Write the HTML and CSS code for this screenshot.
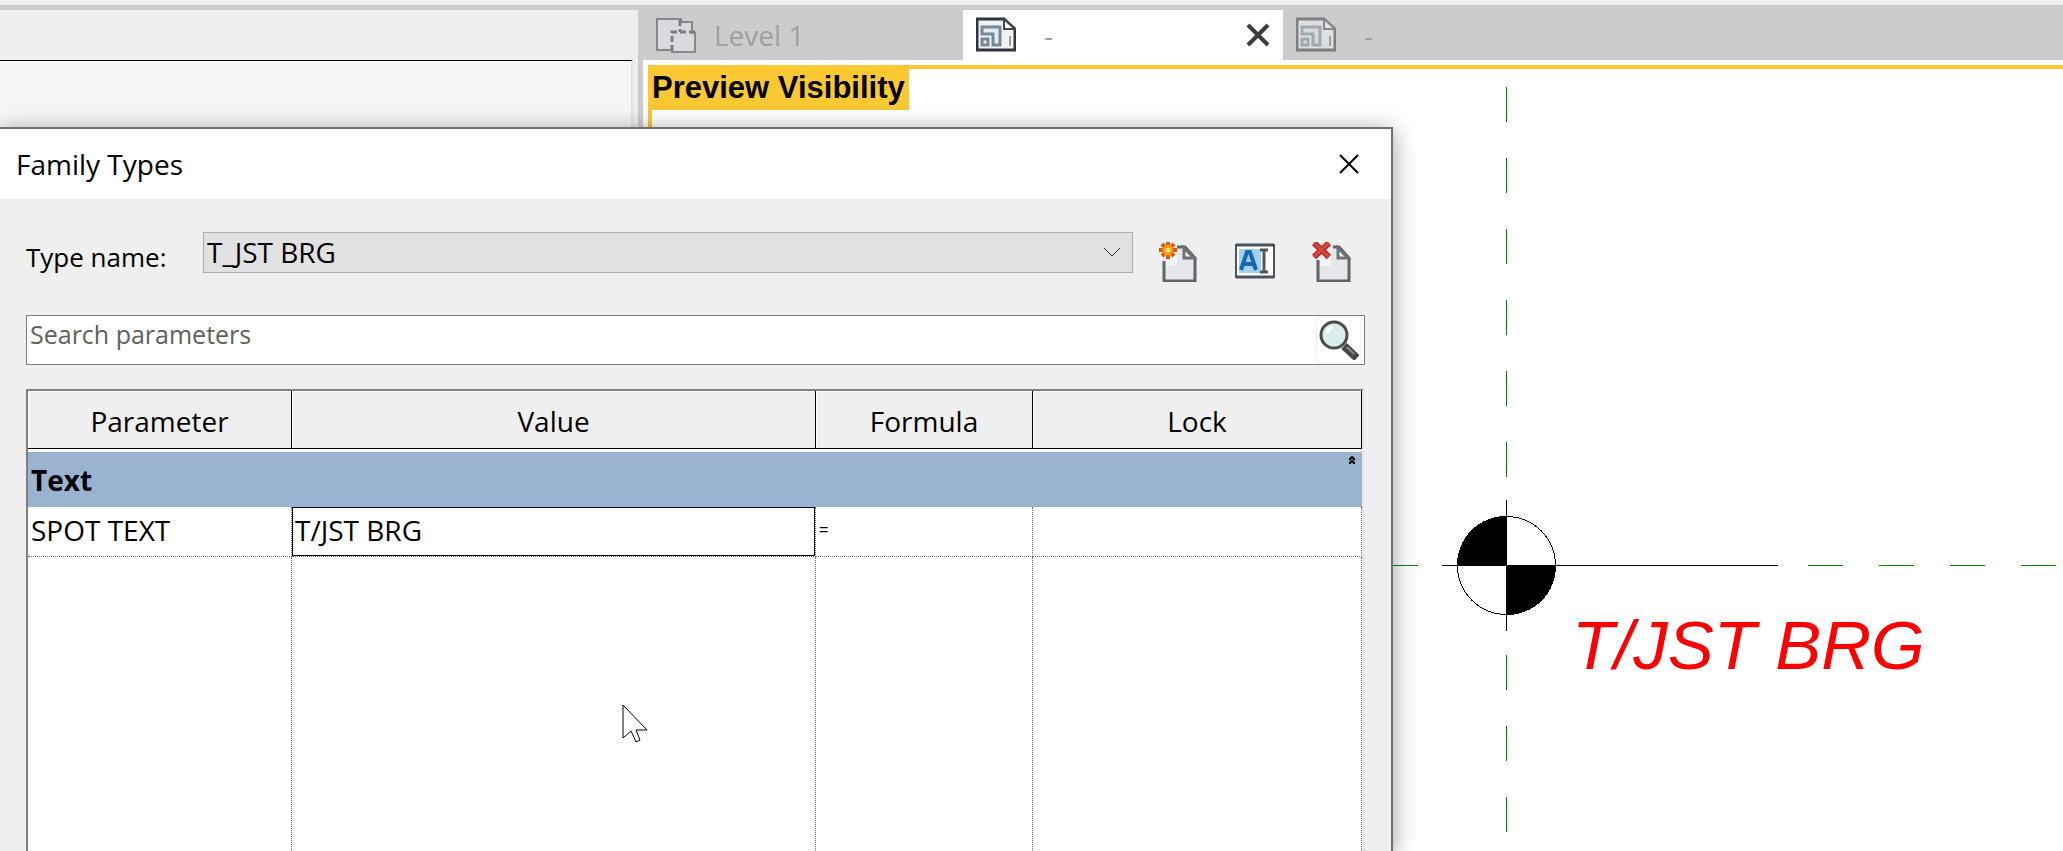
FILE: index.html
```html
<!DOCTYPE html>
<html lang="en">
<head>
<meta charset="utf-8">
<title>Family Types</title>
<link rel="stylesheet" href="styles.css">
</head>
<body>
<div class="app">
  <aside class="side-panel"><div class="side-content"></div></aside>
  <main class="workspace">
    <nav class="tabs">
      <button class="tab" type="button">
        <svg class="icon" viewBox="0 0 40 40" fill="none">
          <path d="M1 4H25V7H36V18H39V37H16V35H1Z" fill="#d8dadd" stroke="#85898e" stroke-width="2"/>
          <path d="M24 5V17M39 17H16V36" stroke="#7b7f84" stroke-width="3" stroke-dasharray="6 3"/>
        </svg>
        <span>Level 1</span>
      </button>
      <div class="tab tab-active">
        <svg class="icon" viewBox="0 0 40 40" fill="none">
          <path d="M1 4H28L39 14V35H1Z" fill="#f1f2f4" stroke="#30353b" stroke-width="3"/>
          <path d="M28 4V14H39Z" fill="#fff" stroke="#3f454c" stroke-width="2"/>
          <path d="M6 12H24V30H17V19H6Z" fill="#e3eaf2" stroke="#76879a" stroke-width="3"/>
          <path d="M6 24H12V30H6Z" fill="#e3eaf2" stroke="#76879a" stroke-width="3"/>
          <path d="M34 21V31" stroke="#9a9da1" stroke-width="2"/>
        </svg>
        <span>-</span>
        <button class="tab-close" type="button" aria-label="Close view">
          <svg viewBox="0 0 24 24"><path d="M2 2L22 22M22 2L2 22" stroke="#3b3b3b" stroke-width="4"/></svg>
        </button>
      </div>
      <button class="tab" type="button">
        <svg class="icon faded" viewBox="0 0 40 40" fill="none">
          <path d="M1 4H28L39 14V35H1Z" fill="#f1f2f4" stroke="#30353b" stroke-width="3"/>
          <path d="M28 4V14H39Z" fill="#fff" stroke="#3f454c" stroke-width="2"/>
          <path d="M6 12H24V30H17V19H6Z" fill="#e3eaf2" stroke="#76879a" stroke-width="3"/>
          <path d="M6 24H12V30H6Z" fill="#e3eaf2" stroke="#76879a" stroke-width="3"/>
          <path d="M34 21V31" stroke="#777" stroke-width="2"/>
        </svg>
        <span>-</span>
      </button>
    </nav>
    <section class="view">
      <svg class="drawing" shape-rendering="crispEdges" aria-label="Spot elevation symbol">
        <g transform="translate(-652 -69)" fill="none">
          <path d="M1506.500 87V477" stroke="#008000" stroke-dasharray="35 36"/>
          <path d="M1506.500 655V851" stroke="#008000" stroke-dasharray="35 36"/>
          <path d="M1383 565.500H1418" stroke="#008000"/>
          <path d="M1808 565.500H2063" stroke="#008000" stroke-dasharray="35 36"/>
          <path d="M1442 565.500H1778M1506.500 500V631" stroke="#000"/>
          <circle cx="1506.500" cy="565.500" r="49" stroke="#000"/>
          <path d="M1507 566V516A49 49 0 0 0 1457 566ZM1506 565H1556A49 49 0 0 1 1506 615Z" fill="#000"/>
        </g>
        <text class="spot-text" x="920" y="600">T/JST BRG</text>
      </svg>
      <h1 class="preview">Preview Visibility</h1>
    </section>
  </main>

  <div class="dialog" role="dialog" aria-labelledby="dialog-title">
    <header class="titlebar">
      <h2 id="dialog-title">Family Types</h2>
      <button class="dialog-close" type="button" aria-label="Close">
        <svg viewBox="0 0 20 20"><path d="M1 1L19 19M19 1L1 19" stroke="#000" stroke-width="2"/></svg>
      </button>
    </header>
    <div class="dialog-body">
      <div class="type-row">
        <label for="type-name">Type name:</label>
        <div class="combo">
          <select id="type-name"><option>T_JST BRG</option></select>
          <svg class="chevron" viewBox="0 0 18 10"><path d="M1 1L9 9L17 1" fill="none" stroke="#333" stroke-width="1"/></svg>
        </div>
        <div class="actions">
          <button type="button" aria-label="New type">
            <svg viewBox="0 0 40 40" fill="none">
              <path d="M6 5H27L37 16V39H6Z" fill="#e6e7ec" stroke="#5f6469" stroke-width="3"/>
              <path d="M26 6V16H36Z" fill="#fff" stroke="#6c7177" stroke-width="3"/>
              <path d="M0 0H19V12L14 19H0Z" fill="#efefef"/>
              <path d="M8 20L19 10V24H8Z" fill="#f4f4f6"/>
              <path d="M10 0V17M1 8H19M4 2L16 14M16 2L4 14" stroke="#e3560f" stroke-width="4"/>
              <circle cx="10" cy="8" r="4" fill="#ffe27a" stroke="#f39a12" stroke-width="3"/>
            </svg>
          </button>
          <button type="button" aria-label="Rename type">
            <svg viewBox="0 0 40 40" fill="none">
              <path d="M1 3H39V35H1Z" fill="#fff" stroke="#4d535a" stroke-width="2"/>
              <path d="M1 3H39M1 35H39" stroke="#4d535a" stroke-width="3"/>
              <path d="M4 7H26V31H4Z" fill="#a3d1e8"/>
              <path d="M6 28L12 10H15L21 28M9 22H18" stroke="#1766b5" stroke-width="4"/>
              <path d="M25 8H28L29 9L30 8H33M29 9V29M25 30H28L29 29L30 30H33" stroke="#50565d" stroke-width="3"/>
            </svg>
          </button>
          <button type="button" aria-label="Delete type">
            <svg viewBox="0 0 40 40" fill="none">
              <path d="M6 5H27L37 16V39H6Z" fill="#e6e7ec" stroke="#5f6469" stroke-width="3"/>
              <path d="M26 6V16H36Z" fill="#fff" stroke="#6c7177" stroke-width="3"/>
              <path d="M0 0H21V12L16 18H0Z" fill="#efefef"/>
              <path d="M8 18L19 13V24H8Z" fill="#f4f4f6"/>
              <path d="M2 1L17 15M17 1L2 15" stroke="#b52a26" stroke-width="6"/>
              <path d="M2 1L17 15M17 1L2 15" stroke="#df453f" stroke-width="3"/>
            </svg>
          </button>
        </div>
      </div>

      <div class="search">
        <input type="text" aria-label="Search parameters" placeholder="Search parameters">
        <button type="button" aria-label="Search">
          <svg viewBox="0 0 40 40" fill="none">
            <path d="M25 26L38 38" stroke="#484848" stroke-width="8"/>
            <path d="M28 27L35 34" stroke="#8a8a8a" stroke-width="2"/>
            <circle cx="15" cy="15" r="13" fill="#d9ecee" stroke="#4a4a4a" stroke-width="3"/>
            <path d="M8 13Q9 8 14 7" stroke="#fff" stroke-width="3"/>
          </svg>
        </button>
      </div>

      <div class="grid-frame">
        <table class="grid">
          <colgroup><col class="c-param"><col><col class="c-formula"><col class="c-lock"></colgroup>
          <thead>
            <tr><th>Parameter</th><th>Value</th><th>Formula</th><th>Lock</th></tr>
          </thead>
          <tbody>
            <tr class="gap"><td colspan="4"></td></tr>
            <tr class="group">
              <th colspan="4" scope="rowgroup">
                <div class="group-head">
                  <span>Text</span>
                  <button type="button" aria-label="Collapse group">
                    <svg viewBox="0 0 6 8"><path d="M0 4L3 1L6 4M0 8L3 5L6 8" fill="none" stroke="#000" stroke-width="2"/></svg>
                  </button>
                </div>
              </th>
            </tr>
            <tr class="param">
              <td>SPOT TEXT</td>
              <td class="edit"><input type="text" aria-label="SPOT TEXT value" value="T/JST BRG"></td>
              <td class="equals">=</td>
              <td></td>
            </tr>
            <tr class="rest"><td></td><td></td><td></td><td></td></tr>
          </tbody>
        </table>
      </div>
    </div>
  </div>

  <svg class="cursor" viewBox="0 0 26 39"><path d="M1 1V34L9 27L14 38L18 36L14 26H25Z" fill="#fff" stroke="#000" stroke-width="1"/></svg>
</div>
</body>
</html>
```

FILE: styles.css
```css
* { box-sizing: border-box; }

body {
  margin: 0;
  font-family: "Open Sans", "Noto Sans", sans-serif;
  font-size: 28px;
  line-height: 38px;
  color: #000;
}

button {
  margin: 0;
  padding: 0;
  border: 0;
  background: none;
  font: inherit;
  color: inherit;
}

svg { display: block; }

.app {
  position: relative;
  display: flex;
  height: 100vh;
  overflow: hidden;
  border-top: 5px solid #eee;
  padding-top: 5px;
  background: #ccc;
}

/* Left palette behind the dialog */
.side-panel {
  flex: 0 0 638px;
  margin-right: 5px;
  padding: 50px 5px 0 0;
  background: #eee;
}

.side-content {
  height: 100%;
  border-top: 1px solid #000;
  border-right: 2px solid #e4e4e4;
  background: #f6f6f6;
}

/* View tabs and drawing area */
.workspace {
  flex: 1;
  min-width: 0;
  display: flex;
  flex-direction: column;
}

.tabs { display: flex; height: 50px; }

.tab {
  display: flex;
  align-items: center;
  flex: 0 0 320px;
  gap: 18px;
  padding: 0 13px;
  color: #a0a0a0;
  text-align: left;
}

.tab-active { background: #fff; }
.icon { width: 40px; height: 40px; }
.faded { opacity: .5; }
.tab span { padding-left: 10px; }
.tab:first-child span { padding-left: 0; }
.tab-close { margin-left: auto; }
.tab-close svg { width: 24px; height: 24px; }

.view {
  position: relative;
  flex: 1;
  min-height: 0;
  margin: 5px 0 0 5px;
  border: solid #fac832;
  border-width: 4px 0 0 4px;
  background: #fff;
  box-shadow: 0 0 0 5px #fff;
}

.drawing { width: 100%; height: 100%; }

.spot-text {
  font: italic 69px "Liberation Sans", sans-serif;
  fill: #f00;
}

.preview {
  position: absolute;
  left: -4px;
  top: -4px;
  margin: 0;
  padding: 3px 4px 2px;
  background: #fac832;
  font: bold 31px/40px "Liberation Sans", sans-serif;
}

/* Family Types window */
.dialog {
  position: absolute;
  left: 0;
  top: 122px;
  bottom: 0;
  width: 1393px;
  display: flex;
  flex-direction: column;
  border: solid #707070;
  border-width: 2px 2px 0 0;
  background: #efefef;
  box-shadow: 0 4px 22px rgba(0, 0, 0, .4);
}

.titlebar {
  display: flex;
  align-items: center;
  justify-content: space-between;
  height: 70px;
  padding: 0 32px 0 16px;
  background: #fff;
}

.titlebar h2 { margin: 0; font-size: 28px; font-weight: 400; }
.dialog-close svg { width: 20px; height: 20px; }

.dialog-body {
  flex: 1;
  min-height: 0;
  display: flex;
  flex-direction: column;
  padding: 33px 26px 0;
}

.type-row {
  display: flex;
  align-items: flex-start;
  height: 83px;
}

.type-row label { width: 177px; padding-top: 6px; font-size: 26px; }

.combo { position: relative; flex: 1; }

.combo select {
  width: 100%;
  height: 41px;
  padding: 0 0 2px 3px;
  border: 1px solid #adadad;
  border-radius: 0;
  background: #e1e1e1;
  appearance: none;
  font: inherit;
  color: #000;
}

.chevron {
  position: absolute;
  right: 12px;
  top: 15px;
  width: 18px;
  height: 10px;
  pointer-events: none;
}

.actions {
  display: flex;
  gap: 37px;
  padding: 10px 13px 0 25px;
}

.actions svg { width: 40px; height: 40px; }

.search {
  display: flex;
  height: 50px;
  border: 1px solid #7a7a7a;
  background: #fff;
}

.search input {
  flex: 1;
  min-width: 0;
  padding: 0 0 12px 3px;
  border: 0;
  background: none;
  font: inherit;
  font-size: 25px;
  font-weight: 500;
}

.search input::placeholder { color: #606060; opacity: 1; }

.search button {
  margin: 1px 2px 1px 0;
  padding: 2px;
  border: 1px solid #f0f0f0;
}

.search button svg { width: 40px; height: 40px; }

.grid-frame {
  flex: 1;
  min-height: 0;
  margin: 24px 1px 0 0;
  border: solid;
  border-width: 2px 2px 0;
  border-color: #808080 #e8e8e8 #808080 #808080;
  background: #fff;
}

.grid {
  width: 100%;
  height: 100%;
  table-layout: fixed;
  border-collapse: separate;
  border-spacing: 0;
}

.c-param { width: 264px; }
.c-formula { width: 217px; }
.c-lock { width: 329px; }

.grid th, .grid td { padding: 0; font-weight: 400; }

.grid thead th {
  height: 58px;
  padding-top: 3px;
  border-right: 1px solid #000;
  border-bottom: 1px solid #000;
  background: #efefef;
  box-shadow: inset 1px 1px #fff;
}

.grid .gap td { height: 3px; }

.grid .group th {
  height: 55px;
  background: #99b3d1;
  font-weight: 700;
  vertical-align: top;
}

.group-head {
  display: flex;
  align-items: flex-start;
  justify-content: space-between;
  padding: 4px 7px 0 3px;
}

.group-head span { padding-top: 5px; }
.group-head button { width: 6px; }
.group-head button svg { width: 6px; height: 8px; }

.param td {
  height: 50px;
  border-right: 1px dotted #707070;
  border-bottom: 1px dotted #707070;
}

.grid .param td { padding: 0 0 4px 3px; }
.grid .param .edit { padding: 0; }

.edit input {
  display: block;
  width: 100%;
  height: 49px;
  padding: 0 0 4px 2px;
  border: 1px solid #000;
  font: inherit;
}

.grid .param .equals {
  font-family: "Liberation Sans", sans-serif;
  font-size: 16px;
  line-height: 20px;
}

.rest td { border-right: 1px dotted #707070; }

.cursor {
  position: absolute;
  left: 622px;
  top: 699px;
  width: 26px;
  height: 39px;
}
```
